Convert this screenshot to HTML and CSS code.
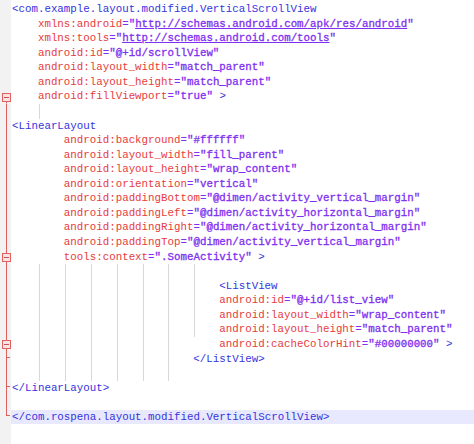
FILE: index.html
```html
<!DOCTYPE html>
<html>
<head>
<meta charset="utf-8">
<link rel="stylesheet" href="styles.css">
</head>
<body>
<div class="editor">
  <div class="row"><div class="gut"></div><div class="code"><span class="t">&lt;com.example.layout.modified.VerticalScrollView</span></div></div>
  <div class="row"><div class="gut"></div><div class="code">    <span class="a">xmlns:android</span><span class="o">=</span><span class="s">"<u>http://schemas.android.com/apk/res/android</u>"</span></div></div>
  <div class="row"><div class="gut"></div><div class="code">    <span class="a">xmlns:tools</span><span class="o">=</span><span class="s">"<u>http://schemas.android.com/tools</u>"</span></div></div>
  <div class="row"><div class="gut"></div><div class="code">    <span class="a">android:id</span><span class="o">=</span><span class="s">"@+id/scrollView"</span></div></div>
  <div class="row"><div class="gut"></div><div class="code">    <span class="a">android:layout_width</span><span class="o">=</span><span class="s">"match_parent"</span></div></div>
  <div class="row"><div class="gut"></div><div class="code">    <span class="a">android:layout_height</span><span class="o">=</span><span class="s">"match_parent"</span></div></div>
  <div class="row"><div class="gut start"><span class="fold"></span></div><div class="code">    <span class="a">android:fillViewport</span><span class="o">=</span><span class="s">"true"</span> <span class="t">&gt;</span></div></div>
  <div class="row"><div class="gut v"></div><div class="code"><span class="ind"></span><span class="ig"></span></div></div>
  <div class="row"><div class="gut v"></div><div class="code"><span class="t">&lt;LinearLayout</span></div></div>
  <div class="row"><div class="gut v"></div><div class="code">        <span class="a">android:background</span><span class="o">=</span><span class="s">"#ffffff"</span></div></div>
  <div class="row"><div class="gut v"></div><div class="code">        <span class="a">android:layout_width</span><span class="o">=</span><span class="s">"fill_parent"</span></div></div>
  <div class="row"><div class="gut v"></div><div class="code">        <span class="a">android:layout_height</span><span class="o">=</span><span class="s">"wrap_content"</span></div></div>
  <div class="row"><div class="gut v"></div><div class="code">        <span class="a">android:orientation</span><span class="o">=</span><span class="s">"vertical"</span></div></div>
  <div class="row"><div class="gut v"></div><div class="code">        <span class="a">android:paddingBottom</span><span class="o">=</span><span class="s">"@dimen/activity_vertical_margin"</span></div></div>
  <div class="row"><div class="gut v"></div><div class="code">        <span class="a">android:paddingLeft</span><span class="o">=</span><span class="s">"@dimen/activity_horizontal_margin"</span></div></div>
  <div class="row"><div class="gut v"></div><div class="code">        <span class="a">android:paddingRight</span><span class="o">=</span><span class="s">"@dimen/activity_horizontal_margin"</span></div></div>
  <div class="row"><div class="gut v"></div><div class="code">        <span class="a">android:paddingTop</span><span class="o">=</span><span class="s">"@dimen/activity_vertical_margin"</span></div></div>
  <div class="row"><div class="gut v"><span class="fold"></span></div><div class="code">        <span class="a">tools:context</span><span class="o">=</span><span class="s">".SomeActivity"</span> <span class="t">&gt;</span></div></div>
  <div class="row"><div class="gut v"></div><div class="code"><span class="ind"></span><span class="ig"></span><span class="ig"></span><span class="ig"></span><span class="ig"></span><span class="ig"></span><span class="ig"></span><span class="ig"></span></div></div>
  <div class="row"><div class="gut v"></div><div class="code"><span class="ind"></span><span class="ig"></span><span class="ig"></span><span class="ig"></span><span class="ig"></span><span class="ig"></span><span class="ig"></span><span class="ig"></span><span class="t">&lt;ListView</span></div></div>
  <div class="row"><div class="gut v"></div><div class="code"><span class="ind"></span><span class="ig"></span><span class="ig"></span><span class="ig"></span><span class="ig"></span><span class="ig"></span><span class="ig"></span><span class="ig"></span><span class="a">android:id</span><span class="o">=</span><span class="s">"@+id/list_view"</span></div></div>
  <div class="row"><div class="gut v"></div><div class="code"><span class="ind"></span><span class="ig"></span><span class="ig"></span><span class="ig"></span><span class="ig"></span><span class="ig"></span><span class="ig"></span><span class="ig"></span><span class="a">android:layout_width</span><span class="o">=</span><span class="s">"wrap_content"</span></div></div>
  <div class="row"><div class="gut v"></div><div class="code"><span class="ind"></span><span class="ig"></span><span class="ig"></span><span class="ig"></span><span class="ig"></span><span class="ig"></span><span class="ig"></span><span class="ig"></span><span class="a">android:layout_height</span><span class="o">=</span><span class="s">"match_parent"</span></div></div>
  <div class="row"><div class="gut v"><span class="fold"></span></div><div class="code"><span class="ind"></span><span class="ig"></span><span class="ig"></span><span class="ig"></span><span class="ig"></span><span class="ig"></span><span class="ig"></span><span class="ind"></span><span class="a">android:cacheColorHint</span><span class="o">=</span><span class="s">"#00000000"</span> <span class="t">&gt;</span></div></div>
  <div class="row"><div class="gut tick"></div><div class="code"><span class="ind"></span><span class="ig"></span><span class="ig"></span><span class="ig"></span><span class="ig"></span><span class="ig"></span><span class="ig"></span><span class="t">&lt;/ListView&gt;</span></div></div>
  <div class="row"><div class="gut v"></div><div class="code"><span class="ind"></span><span class="ig"></span><span class="ig"></span><span class="ig"></span><span class="ig"></span><span class="ig"></span><span class="ig"></span></div></div>
  <div class="row"><div class="gut tick"></div><div class="code"><span class="t">&lt;/LinearLayout&gt;</span></div></div>
  <div class="row"><div class="gut v"></div><div class="code"></div></div>
  <div class="row current"><div class="gut end"></div><div class="code"><span class="t">&lt;/com.rospena.layout.modified.VerticalScrollView&gt;</span></div></div>
  <div class="row filler"><div class="gut"></div><div class="code"></div></div>
</div>
</body>
</html>
```
FILE: styles.css
```css
html, body {
  margin: 0;
  padding: 0;
  background: #ffffff;
}

.editor {
  display: flex;
  flex-direction: column;
  height: 444px;
  padding-top: 2px;
  box-sizing: border-box;
  font-family: "Liberation Mono", "Courier New", monospace;
  font-size: 10.8px;
  background: linear-gradient(#f2f2f2, #f2f2f2) 0 0 / 11px 100% no-repeat;
}

.row {
  display: flex;
  height: 14.57px;
  flex: none;
}

.row.filler {
  flex: 1;
}

.gut {
  width: 11px;
  flex: none;
  position: relative;
  background-repeat: no-repeat;
}

.gut.v {
  background-image: linear-gradient(#e06060, #e06060);
  background-size: 1px 100%;
  background-position: 6px 0;
}

.gut.start {
  background-image: linear-gradient(#e06060, #e06060);
  background-size: 1px 50%;
  background-position: 6px 100%;
}

.gut.tick {
  background-image: linear-gradient(#e06060, #e06060), linear-gradient(#e06060, #e06060);
  background-size: 1px 100%, 4px 1px;
  background-position: 6px 0, 6px 40%;
}

.gut.end {
  background-image: linear-gradient(#e06060, #e06060), linear-gradient(#e06060, #e06060);
  background-size: 1px 40%, 4px 1px;
  background-position: 6px 0, 6px 40%;
}

.fold {
  position: absolute;
  left: 2px;
  top: 50%;
  margin-top: -4px;
  width: 9px;
  height: 9px;
  box-sizing: border-box;
  border: 1px solid #e06060;
  background: #fbe3e3;
  display: flex;
  align-items: center;
  justify-content: center;
}

.fold::before {
  content: "";
  width: 5px;
  height: 1px;
  background: #c85050;
}

.code {
  flex: 1;
  padding-left: 1px;
  white-space: pre;
  line-height: 14.57px;
  height: 14.57px;
  color: #000;
}

.row.current .code {
  background: #e8e8ff;
}

.ind, .ig {
  display: inline-block;
  width: 4ch;
  height: 14.57px;
  vertical-align: top;
}

.ig {
  background: linear-gradient(#d8d8d8, #d8d8d8) 1px 0 / 1px 100% no-repeat;
}

.t { color: #3434dc; }
.a { color: #e63c3c; }
.o { color: #8030f0; }
.s { color: #8030f0; -webkit-text-stroke: 0.3px #8030f0; }
.s u { text-decoration: underline; }
```
